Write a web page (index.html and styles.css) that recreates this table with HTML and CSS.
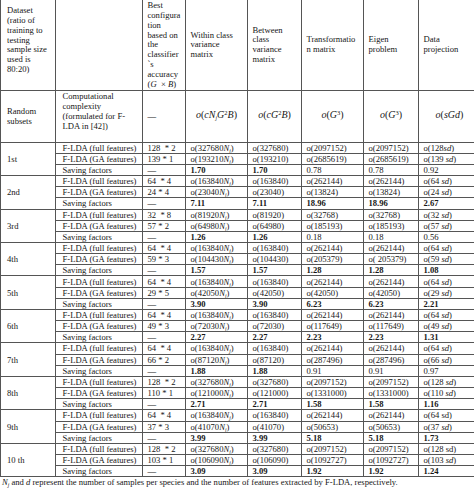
FILE: index.html
```html
<!DOCTYPE html>
<html>
<head>
<meta charset="utf-8">
<link rel="stylesheet" href="styles.css">
</head>
<body>
<div class="page">
<table class="grid">
<colgroup>
<col class="c0"><col class="c1"><col class="c2"><col class="c3"><col class="c4"><col class="c5"><col class="c6"><col class="c7">
</colgroup>
<thead>
<tr class="head">
<th class="set top">Dataset<br>(ratio of<br>training to<br>testing<br>sample size<br>used is<br>80:20)</th>
<th class="lbl"></th>
<th>Best<br>configura<br>tion<br>based on<br>the<br>classifier<br>`s<br>accuracy<br>(<i>G</i> &nbsp;× <i>B</i>)</th>
<th>Within class<br>variance<br>matrix</th>
<th>Between<br>class<br>variance<br>matrix</th>
<th>Transformatio<br>n matrix</th>
<th>Eigen<br>problem</th>
<th>Data<br>projection</th>
</tr>
<tr class="cx">
<td class="set">Random<br>subsets</td>
<td class="lbl top">Computational<br>complexity<br>(formulated for F-<br>LDA in [42])</td>
<td>—</td>
<td class="fx"><i>o</i>(<i>cN</i><sub>j</sub><i>G</i><sup>2</sup><i>B</i>)</td>
<td class="fx"><i>o</i>(<i>cG</i><sup>2</sup><i>B</i>)</td>
<td class="fx"><i>o</i>(<i>G</i><sup>3</sup>)</td>
<td class="fx"><i>o</i>(<i>G</i><sup>3</sup>)</td>
<td class="fx"><i>o</i>(<i>sGd</i>)</td>
</tr>
</thead>
<tbody>
<tr><td class="set" rowspan="3">1st</td><td class="lbl">F-LDA (full features)</td><td>128 &nbsp;* 2</td><td>o(327680<i>N</i><sub>j</sub>)</td><td>o(327680)</td><td>o(2097152)</td><td>o(2097152)</td><td>o(128<i>sd</i>)</td></tr>
<tr><td class="lbl">F-LDA (GA features)</td><td>139 * 1</td><td>o(193210<i>N</i><sub>j</sub>)</td><td>o(193210)</td><td>o(2685619)</td><td>o(2685619)</td><td>o(139 <i>sd</i>)</td></tr>
<tr class="save"><td class="lbl">Saving factors</td><td>—</td><td><b>1.70</b></td><td><b>1.70</b></td><td>0.78</td><td>0.78</td><td>0.92</td></tr>

<tr><td class="set" rowspan="3">2nd</td><td class="lbl">F-LDA (full features)</td><td>64 &nbsp;* 4</td><td>o(163840<i>N</i><sub>j</sub>)</td><td>o(163840)</td><td>o(262144)</td><td>o(262144)</td><td>o(64 <i>sd</i>)</td></tr>
<tr><td class="lbl">F-LDA (GA features)</td><td>24 * 4</td><td>o(23040<i>N</i><sub>j</sub>)</td><td>o(23040)</td><td>o(13824)</td><td>o(13824)</td><td>o(24 <i>sd</i>)</td></tr>
<tr class="save"><td class="lbl">Saving factors</td><td>—</td><td><b>7.11</b></td><td><b>7.11</b></td><td><b>18.96</b></td><td><b>18.96</b></td><td><b>2.67</b></td></tr>

<tr><td class="set" rowspan="3">3rd</td><td class="lbl">F-LDA (full features)</td><td>32 &nbsp;* 8</td><td>o(81920<i>N</i><sub>j</sub>)</td><td>o(81920)</td><td>o(32768)</td><td>o(32768)</td><td>o(32 <i>sd</i>)</td></tr>
<tr><td class="lbl">F-LDA (GA features)</td><td>57 * 2</td><td>o(64980<i>N</i><sub>j</sub>)</td><td>o(64980)</td><td>o(185193)</td><td>o(185193)</td><td>o(57 <i>sd</i>)</td></tr>
<tr class="save"><td class="lbl">Saving factors</td><td>—</td><td><b>1.26</b></td><td><b>1.26</b></td><td>0.18</td><td>0.18</td><td>0.56</td></tr>

<tr><td class="set" rowspan="3">4th</td><td class="lbl">F-LDA (full features)</td><td>64 &nbsp;* 4</td><td>o(163840<i>N</i><sub>j</sub>)</td><td>o(163840)</td><td>o(262144)</td><td>o(262144)</td><td>o(64 <i>sd</i>)</td></tr>
<tr><td class="lbl">F-LDA (GA features)</td><td>59 * 3</td><td>o(104430<i>N</i><sub>j</sub>)</td><td>o(104430)</td><td>o(205379)</td><td>o( 205379)</td><td>o(59 <i>sd</i>)</td></tr>
<tr class="save"><td class="lbl">Saving factors</td><td>—</td><td><b>1.57</b></td><td><b>1.57</b></td><td><b>1.28</b></td><td><b>1.28</b></td><td><b>1.08</b></td></tr>

<tr><td class="set" rowspan="3">5th</td><td class="lbl">F-LDA (full features)</td><td>64 &nbsp;* 4</td><td>o(163840<i>N</i><sub>j</sub>)</td><td>o(163840)</td><td>o(262144)</td><td>o(262144)</td><td>o(64 <i>sd</i>)</td></tr>
<tr><td class="lbl">F-LDA (GA features)</td><td>29 * 5</td><td>o(42050<i>N</i><sub>j</sub>)</td><td>o(42050)</td><td>o(42050)</td><td>o(42050)</td><td>o(29 <i>sd</i>)</td></tr>
<tr class="save"><td class="lbl">Saving factors</td><td>—</td><td><b>3.90</b></td><td><b>3.90</b></td><td><b>6.23</b></td><td><b>6.23</b></td><td><b>2.21</b></td></tr>

<tr><td class="set" rowspan="3">6th</td><td class="lbl">F-LDA (full features)</td><td>64 &nbsp;* 4</td><td>o(163840<i>N</i><sub>j</sub>)</td><td>o(163840)</td><td>o(262144)</td><td>o(262144)</td><td>o(64 <i>sd</i>)</td></tr>
<tr><td class="lbl">F-LDA (GA features)</td><td>49 * 3</td><td>o(72030<i>N</i><sub>j</sub>)</td><td>o(72030)</td><td>o(117649)</td><td>o(117649)</td><td>o(49 <i>sd</i>)</td></tr>
<tr class="save"><td class="lbl">Saving factors</td><td>—</td><td><b>2.27</b></td><td><b>2.27</b></td><td><b>2.23</b></td><td><b>2.23</b></td><td><b>1.31</b></td></tr>

<tr><td class="set" rowspan="3">7th</td><td class="lbl">F-LDA (full features)</td><td>64 &nbsp;* 4</td><td>o(163840<i>N</i><sub>j</sub>)</td><td>o(163840)</td><td>o(262144)</td><td>o(262144)</td><td>o(64 <i>sd</i>)</td></tr>
<tr><td class="lbl">F-LDA (GA features)</td><td>66 * 2</td><td>o(87120<i>N</i><sub>j</sub>)</td><td>o(87120)</td><td>o(287496)</td><td>o(287496)</td><td>o(66 <i>sd</i>)</td></tr>
<tr class="save"><td class="lbl">Saving factors</td><td>—</td><td><b>1.88</b></td><td><b>1.88</b></td><td>0.91</td><td>0.91</td><td>0.97</td></tr>

<tr><td class="set" rowspan="3">8th</td><td class="lbl">F-LDA (full features)</td><td>128 &nbsp;* 2</td><td>o(327680<i>N</i><sub>j</sub>)</td><td>o(327680)</td><td>o(2097152)</td><td>o(2097152)</td><td>o(128 <i>sd</i>)</td></tr>
<tr><td class="lbl">F-LDA (GA features)</td><td>110 * 1</td><td>o(121000<i>N</i><sub>j</sub>)</td><td>o(121000)</td><td>o(1331000)</td><td>o(1331000)</td><td>o(110 <i>sd</i>)</td></tr>
<tr class="save"><td class="lbl">Saving factors</td><td>—</td><td><b>2.71</b></td><td><b>2.71</b></td><td><b>1.58</b></td><td><b>1.58</b></td><td><b>1.16</b></td></tr>

<tr><td class="set" rowspan="3">9th</td><td class="lbl">F-LDA (full features)</td><td>64 &nbsp;* 4</td><td>o(163840<i>N</i><sub>j</sub>)</td><td>o(163840)</td><td>o(262144)</td><td>o(262144)</td><td>o(64 sd)</td></tr>
<tr><td class="lbl">F-LDA (GA features)</td><td>37 * 3</td><td>o(41070<i>N</i><sub>j</sub>)</td><td>o(41070)</td><td>o(50653)</td><td>o(50653)</td><td>o(37 <i>sd</i>)</td></tr>
<tr class="save"><td class="lbl">Saving factors</td><td>—</td><td><b>3.99</b></td><td><b>3.99</b></td><td><b>5.18</b></td><td><b>5.18</b></td><td><b>1.73</b></td></tr>

<tr><td class="set" rowspan="3">10 th</td><td class="lbl">F-LDA (full features)</td><td>128 &nbsp;* 2</td><td>o(327680<i>N</i><sub>j</sub>)</td><td>o(327680)</td><td>o(2097152)</td><td>o(2097152)</td><td>o(128 sd)</td></tr>
<tr><td class="lbl">F-LDA (GA features)</td><td>103 * 1</td><td>o(106090<i>N</i><sub>j</sub>)</td><td>o(106090)</td><td>o(1092727)</td><td>o(1092727)</td><td>o(103 <i>sd</i>)</td></tr>
<tr class="save"><td class="lbl">Saving factors</td><td>—</td><td><b>3.09</b></td><td><b>3.09</b></td><td><b>1.92</b></td><td><b>1.92</b></td><td><b>1.24</b></td></tr>
</tbody>
</table>
<p class="note"><i>N</i><sub>j</sub> and <i>d</i> represent the number of samples per species and the number of features extracted by F-LDA, respectively.</p>
</div>
</body>
</html>
```

FILE: styles.css
```css
html, body {
  margin: 0;
  padding: 0;
  background: #ffffff;
}

.page {
  width: 474px;
  height: 488px;
  overflow: hidden;
  font-family: "Liberation Serif", "Times New Roman", serif;
  font-size: 8.6px;
  color: #161616;
}

.grid {
  border-collapse: collapse;
  table-layout: fixed;
  width: 480px;
  border-left: 1px solid #b8b8b8;
}

.c0 { width: 55px; }
.c1 { width: 87px; }
.c2 { width: 43px; }
.c3 { width: 62px; }
.c4 { width: 54px; }
.c5 { width: 62px; }
.c6 { width: 55px; }
.c7 { width: 62px; }

.grid th,
.grid td {
  border: 1px solid #555555;
  padding: 0 0 0 4.5px;
  text-align: left;
  vertical-align: middle;
  white-space: nowrap;
  overflow: hidden;
  font-weight: normal;
  line-height: 10px;
}

.grid thead .head th {
  border-top: none;
  line-height: 9.85px;
  padding-top: 1px;
}

.head { height: 89px; }
.cx { height: 52px; }
.grid tbody tr { height: 11.17px; }

.grid .set { padding-left: 6px; }
.grid .lbl { padding-left: 6.5px; }

.grid .top {
  vertical-align: top;
}

.grid .head .set.top { padding-top: 6px; }

.fx {
  text-align: center !important;
  font-size: 10px;
  padding: 0 0 2px 0 !important;
}

sub {
  font-size: 5.6px;
  vertical-align: -1.5px;
  line-height: 0;
  font-style: italic;
}

sup {
  font-size: 6.5px;
  vertical-align: 3.5px;
  line-height: 0;
}

.note {
  margin: 0;
  padding: 0 0 0 2px;
  line-height: 11px;
  white-space: nowrap;
}
```
